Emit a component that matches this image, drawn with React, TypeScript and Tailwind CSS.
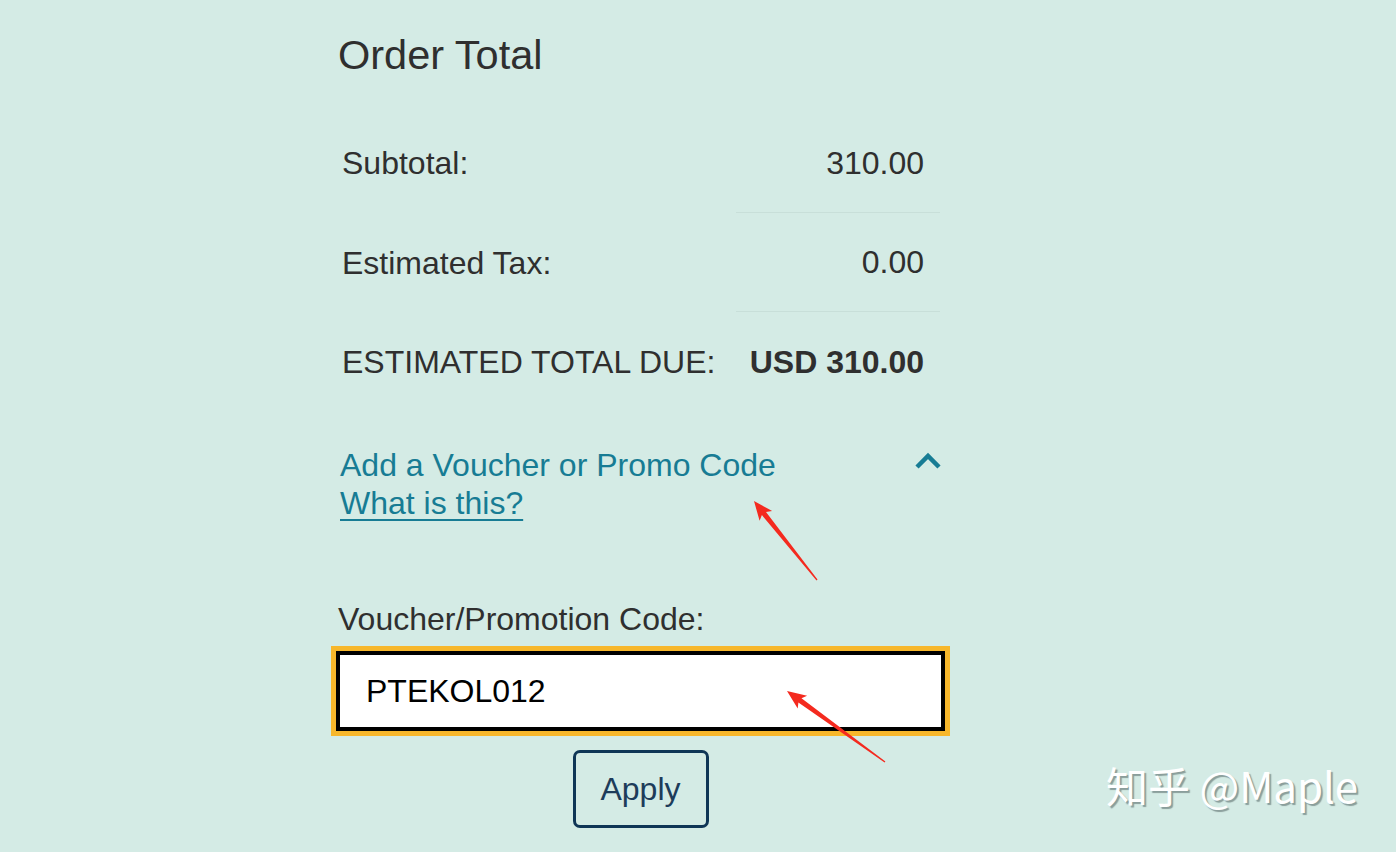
import React from "react";

function arrowPoints(tx: number, ty: number, ex: number, ey: number) {
  const dx = tx - ex;
  const dy = ty - ey;
  const len = Math.hypot(dx, dy);
  const ux = dx / len;
  const uy = dy / len;
  const nx = -uy;
  const ny = ux;
  const head = 19;
  const wing = 8;
  const shaft = 2.6;
  const tailW = 0.6;
  const bx = tx - ux * head;
  const by = ty - uy * head;
  const pts = [
    [tx, ty],
    [bx + nx * wing, by + ny * wing],
    [bx + ux * 3 + nx * shaft, by + uy * 3 + ny * shaft],
    [ex + nx * tailW, ey + ny * tailW],
    [ex - nx * tailW, ey - ny * tailW],
    [bx + ux * 3 - nx * shaft, by + uy * 3 - ny * shaft],
    [bx - nx * wing, by - ny * wing],
  ];
  return pts.map((p) => `${p[0].toFixed(1)},${p[1].toFixed(1)}`).join(" ");
}

export default function App() {
  return (
    <div
      className="relative w-[1396px] h-[852px] overflow-hidden bg-[#d4ebe5] text-[#2f2f2f]"
      style={{ fontFamily: '"Liberation Sans", Arial, sans-serif' }}
    >
      <div className="flex flex-col w-[619px] ml-[331px]">
        <h1 className="mt-[34px] ml-[7px] text-[41.5px] leading-[41px] font-normal">Order Total</h1>

        <div className="mt-[38px] grid grid-cols-[405px_204px] text-[32px] leading-[32px]">
          <div className="h-[100px] flex items-center pl-[11px]">Subtotal:</div>
          <div className="h-[100px] flex items-center justify-end pr-[16px] border-b border-[#c8dfd9]">310.00</div>
          <div className="h-[99px] flex items-center pl-[11px]">Estimated Tax:</div>
          <div className="h-[99px] flex items-center justify-end pr-[16px] border-b border-[#c8dfd9]">0.00</div>
          <div className="h-[100px] flex items-center pl-[11px]">ESTIMATED TOTAL DUE:</div>
          <div className="h-[100px] flex items-center justify-end pr-[16px] font-bold">USD 310.00</div>
        </div>

        <div className="mt-[34px] flex justify-between pl-[9px] pr-[8px] text-[32px] leading-[38px] text-[#177c94]">
          <div className="flex flex-col items-start">
            <span>Add a Voucher or Promo Code</span>
            <span className="underline underline-offset-[5px] decoration-2">What is this?</span>
          </div>
          <svg width="28" height="18" viewBox="0 0 28 18" className="mt-[6px]">
            <path d="M3 15 L14 4 L25 15" fill="none" stroke="#177c94" strokeWidth="4.5" />
          </svg>
        </div>

        <label className="mt-[81px] ml-[7px] text-[32px] leading-[32px]">Voucher/Promotion Code:</label>

        <div className="mt-[11px] h-[90px] p-[5px] bg-[#f7b72b]">
          <div className="h-full border-[4px] border-black bg-white flex items-center pl-[26px] text-[32px] text-black">
            PTEKOL012
          </div>
        </div>

        <div className="mt-[14px] flex justify-center">
          <button className="w-[136px] h-[78px] rounded-[7px] border-[3px] border-[#0f3656] text-[32px] text-[#1d3c5a] bg-transparent">
            Apply
          </button>
        </div>
      </div>

      <svg className="absolute left-0 top-0 pointer-events-none" width="1396" height="852">
        <polygon points={arrowPoints(754, 501, 817, 580)} fill="#f42a1f" />
        <polygon points={arrowPoints(787, 691, 885, 762)} fill="#f42a1f" />
      </svg>

      <div
        className="absolute left-[1106px] top-[760px] text-[42px] leading-[50px] text-white whitespace-nowrap"
        style={{
          fontFamily: '"Noto Sans CJK SC", "Noto Sans", sans-serif',
          textShadow: "2px 2px 1px #8a9e9b",
        }}
      >
        知乎 @Maple
      </div>
    </div>
  );
}
